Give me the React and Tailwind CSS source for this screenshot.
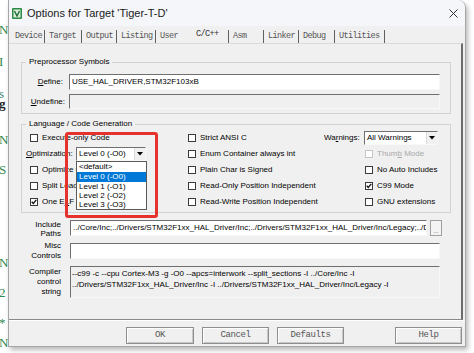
const SANS = "font-['Liberation_Sans',Arial,sans-serif]";
const MONO = "font-['Liberation_Mono','Courier_New',monospace]";
const SUNKEN = "border border-t-[#6f6f6f] border-l-[#6f6f6f] border-b-[#f8f8f8] border-r-[#f8f8f8]";

function Check({ checked = false, disabled = false }) {
  return (
    <span
      className={`flex items-center justify-center w-[8px] h-[8px] shrink-0 border bg-white ${
        disabled ? "border-[#c6c6c6]" : "border-[#3a3a3a]"
      }`}
    >
      {checked && (
        <svg width="6" height="6" viewBox="0 0 6 6">
          <path d="M0.7 2.8 L2.3 4.5 L5.3 0.9" fill="none" stroke="#111" strokeWidth="1.3" />
        </svg>
      )}
    </span>
  );
}

function CheckRow({ checked, disabled, clip = false, children }) {
  return (
    <div className="h-[16px] flex items-center gap-[4px] whitespace-nowrap">
      <Check checked={checked} disabled={disabled} />
      <span className={`${disabled ? "text-[#a9a9a9]" : ""} ${clip ? "w-[34px] overflow-hidden" : ""}`}>{children}</span>
    </div>
  );
}

function Arrow() {
  return (
    <span className="w-[11px] flex items-center justify-center bg-[#f0f0f0] border-l border-[#dcdcdc]">
      <svg width="6" height="4" viewBox="0 0 6 4">
        <path d="M0 0H6L3 3.5Z" fill="#000" />
      </svg>
    </span>
  );
}

function Tab({ w, children, right = true, left = false, active = false }) {
  return (
    <div
      className={`h-[13px] pl-[4px] flex items-center ${w} ${right ? "border-r border-[#5f5f5f]" : ""} ${
        left ? "border-l border-[#5f5f5f]" : ""
      } ${active ? "text-[#333] -mt-[2px]" : "text-[#555]"}`}
    >
      {children}
    </div>
  );
}

function Button({ children, w }) {
  return (
    <div
      className={`h-[17px] ${w} flex items-center justify-center border border-[#8e8e8e] bg-[#f0f0f0] shadow-[inset_1px_1px_0_#ffffff,inset_-1px_-1px_0_#c8c8c8] text-[#555] ${MONO} text-[9px] tracking-[-0.4px]`}
    >
      {children}
    </div>
  );
}

export default function App() {
  return (
    <div className={`w-[474px] h-[353px] overflow-hidden bg-white flex ${SANS} text-[8px] text-black`}>
      {/* editor text peeking out behind the dialog */}
      <div className="w-[9px] shrink-0 flex flex-col font-['Liberation_Serif',serif] text-[13px] leading-[12px] text-[#2f8a4c] -ml-[1px]">
        <div className="h-[24px]" />
        <div className="h-[12px]">N</div>
        <div className="h-[20px]" />
        <div className="h-[12px]">I</div>
        <div className="h-[20px]" />
        <div className="h-[10px] text-[#3b7f6a]">s</div>
        <div className="h-[12px] text-[#222] font-bold">g</div>
        <div className="h-[24px]" />
        <div className="h-[12px]">N</div>
        <div className="h-[18px]" />
        <div className="h-[12px]">S</div>
        <div className="h-[81px]" />
        <div className="h-[12px]">N</div>
        <div className="h-[18px]" />
        <div className="h-[12px]">2</div>
        <div className="h-[18px]" />
        <div className="h-[12px]">*</div>
        <div className="h-[8px]" />
        <div className="h-[12px]">N</div>
      </div>

      {/* dialog window */}
      <div className="w-[458px] h-[347px] shrink-0 flex flex-col bg-[#f0f0f0] border-l border-r border-b border-[#a6a6a6] rounded-tr-[8px] shadow-[2px_3px_5px_rgba(0,0,0,0.28)]">
        {/* title bar */}
        <div className="h-[26px] shrink-0 flex items-center pl-[3px] pr-[7px] bg-[#f4f6f9] rounded-tr-[8px]">
          <svg width="10" height="11" viewBox="0 0 10 11">
            <rect x="0" y="0" width="10" height="11" rx="1" fill="#2e8b45" />
            <rect x="1.5" y="1.5" width="7" height="8" fill="#d9eedc" />
            <path d="M2.5 3 L5 8 L7.5 3" fill="none" stroke="#1f6b33" strokeWidth="1.4" />
          </svg>
          <span className="ml-[5px] text-[11px] leading-[13px] text-[#1a1a1a]">Options for Target 'Tiger-T-D'</span>
          <svg className="ml-auto" width="9" height="9" viewBox="0 0 9 9">
            <path d="M0.5 0.5 L8.5 8.5 M8.5 0.5 L0.5 8.5" stroke="#333" strokeWidth="1" />
          </svg>
        </div>

        {/* tabs */}
        <div className={`h-[17px] shrink-0 flex items-start pt-[4px] pl-[2px] ${MONO} text-[8.5px] tracking-[-0.6px]`}>
          <Tab w="w-[34px]">Device</Tab>
          <Tab w="w-[37px]">Target</Tab>
          <Tab w="w-[35px]">Output</Tab>
          <Tab w="w-[39px]">Listing</Tab>
          <Tab w="w-[36px]" right={false}>User</Tab>
          <Tab w="w-[36px]" right={false} active>C/C++</Tab>
          <Tab w="w-[36px]" left>Asm</Tab>
          <Tab w="w-[35px]">Linker</Tab>
          <Tab w="w-[36px]">Debug</Tab>
          <Tab w="w-[50px]">Utilities</Tab>
        </div>

        {/* tab page */}
        <div className="h-[277px] shrink-0 mr-[2px] flex flex-col border-t border-[#dadada] border-r-2 border-r-[#6c6c6c] border-b border-b-[#8a8a8a]">
          <fieldset className="ml-[12px] mt-[13px] w-[430px] border border-[#d2d2d2] pb-[4px]">
            <legend className="ml-[4px] px-[3px] leading-[10px]">Preprocessor Symbols</legend>
            <div className="flex items-center mt-[7px] h-[16px]">
              <span className="w-[44px] pr-[3px] text-right">
                <span className="underline">D</span>efine:
              </span>
              <div className={`ml-[3px] w-[371px] h-[16px] bg-white ${SUNKEN} pl-[2px] flex items-center`}>
                USE_HAL_DRIVER,STM32F103xB
              </div>
            </div>
            <div className="flex items-center mt-[4px] h-[15px]">
              <span className="w-[44px] pr-[1px] text-right">
                <span className="underline">U</span>ndefine:
              </span>
              <div className={`ml-[3px] w-[371px] h-[15px] bg-[#f0f0f0] ${SUNKEN}`} />
            </div>
          </fieldset>

          <fieldset className="ml-[12px] mt-[5px] w-[430px] border border-[#d2d2d2] pt-[1px] pb-[2px]">
            <legend className="ml-[4px] px-[3px] leading-[10px]">Language / Code Generation</legend>
            <div className="grid grid-cols-[162px_136px_1fr] pl-[4px]">
              {/* column 1 */}
              <div className="flex flex-col">
                <div className="pl-[4px]">
                  <CheckRow>Execute-only Code</CheckRow>
                </div>
                <div className="h-[16px] flex items-center">
                  <span className="w-[50px]">
                    <span className="underline">O</span>ptimization:
                  </span>
                  <div className="relative">
                    <div className={`flex w-[70px] h-[14px] bg-white ${SUNKEN}`}>
                      <span className="flex-1 pl-[2px] flex items-center">Level 0 (-O0)</span>
                      <Arrow />
                    </div>
                    {/* open drop-down list */}
                    <div className="absolute z-10 top-full left-0 w-[71px] bg-white border border-[#5a5a5a] flex flex-col">
                      <div className="h-[10px] pl-[2px] flex items-center">&lt;default&gt;</div>
                      <div className="h-[10px] pl-[2px] flex items-center bg-[#0078d7] text-white">Level 0 (-O0)</div>
                      <div className="h-[9px] pl-[2px] flex items-center">Level 1 (-O1)</div>
                      <div className="h-[9px] pl-[2px] flex items-center">Level 2 (-O2)</div>
                      <div className="h-[9px] pl-[2px] flex items-center">Level 3 (-O3)</div>
                    </div>
                    {/* red highlight frame */}
                    <div className="absolute z-20 pointer-events-none left-[-11px] top-[-15px] w-[93px] h-[86px] border-[3px] border-[#e5322d] rounded-[3px]" />
                  </div>
                </div>
                <div className="pl-[4px]">
                  <CheckRow clip>Optimize for Time</CheckRow>
                  <CheckRow clip>Split Load and Store Multiple</CheckRow>
                  <CheckRow checked clip>
                    One E<span className="underline">L</span>F Section per Function
                  </CheckRow>
                </div>
              </div>

              {/* column 2 */}
              <div className="flex flex-col">
                <CheckRow>Strict ANSI C</CheckRow>
                <CheckRow>Enum Container always int</CheckRow>
                <CheckRow>Plain Char is Signed</CheckRow>
                <CheckRow>Read-Only Position Independent</CheckRow>
                <CheckRow>Read-Write Position Independent</CheckRow>
              </div>

              {/* column 3 */}
              <div className="flex flex-col">
                <div className="h-[16px] flex items-center">
                  <span className="w-[40px]">
                    Wa<span className="underline">r</span>nings:
                  </span>
                  <div className={`flex w-[74px] h-[14px] bg-white ${SUNKEN}`}>
                    <span className="flex-1 pl-[2px] flex items-center">All Warnings</span>
                    <Arrow />
                  </div>
                </div>
                <div className="pl-[41px]">
                  <CheckRow disabled>
                    Thum<span className="underline">b</span> Mode
                  </CheckRow>
                  <CheckRow>No Auto Includes</CheckRow>
                  <CheckRow checked>C99 Mode</CheckRow>
                  <CheckRow>GNU extensions</CheckRow>
                </div>
              </div>
            </div>
          </fieldset>

          {/* include / misc / compiler string */}
          <div className="mt-[7px] h-[16px] flex">
            <div className="w-[52px] text-right leading-[9px]">
              <div>Include</div>
              <div>Paths</div>
            </div>
            <div className={`ml-[9px] w-[357px] h-[16px] bg-white ${SUNKEN} pl-[2px] flex items-center overflow-hidden whitespace-nowrap`}>
              ../Core/Inc;../Drivers/STM32F1xx_HAL_Driver/Inc;../Drivers/STM32F1xx_HAL_Driver/Inc/Legacy;../Driv
            </div>
            <div className="ml-[3px] w-[12px] h-[16px] bg-[#f4f4f4] border border-[#a0a0a0] flex items-end justify-center text-[6px] leading-[8px] text-[#444]">
              ...
            </div>
          </div>

          <div className="mt-[7px] h-[16px] flex items-center">
            <div className="w-[52px] text-right leading-[10px]">
              <div>Misc</div>
              <div>Controls</div>
            </div>
            <div className={`ml-[9px] w-[370px] h-[16px] bg-white ${SUNKEN}`} />
          </div>

          <div className="mt-[7px] h-[32px] flex">
            <div className="w-[52px] pt-[1px] text-right leading-[10px]">
              <div>Compiler</div>
              <div>control</div>
              <div>string</div>
            </div>
            <div className={`ml-[9px] w-[370px] h-[32px] bg-[#f0f0f0] ${SUNKEN} pl-[1px] pt-[1px] leading-[11px] whitespace-nowrap overflow-hidden`}>
              <div>--c99 -c --cpu Cortex-M3 -g -O0 --apcs=interwork --split_sections -I ../Core/Inc -I</div>
              <div>../Drivers/STM32F1xx_HAL_Driver/Inc -I ../Drivers/STM32F1xx_HAL_Driver/Inc/Legacy -I</div>
            </div>
          </div>
        </div>

        {/* dialog buttons */}
        <div className="flex-1 flex items-start pt-[6px] pl-[117px] pr-[3px] border-t border-white">
          <Button w="w-[68px]">OK</Button>
          <div className="ml-[8px]">
            <Button w="w-[67px]">Cancel</Button>
          </div>
          <div className="ml-[8px]">
            <Button w="w-[67px]">Defaults</Button>
          </div>
          <div className="ml-auto">
            <Button w="w-[67px]">Help</Button>
          </div>
        </div>
      </div>
    </div>
  );
}
